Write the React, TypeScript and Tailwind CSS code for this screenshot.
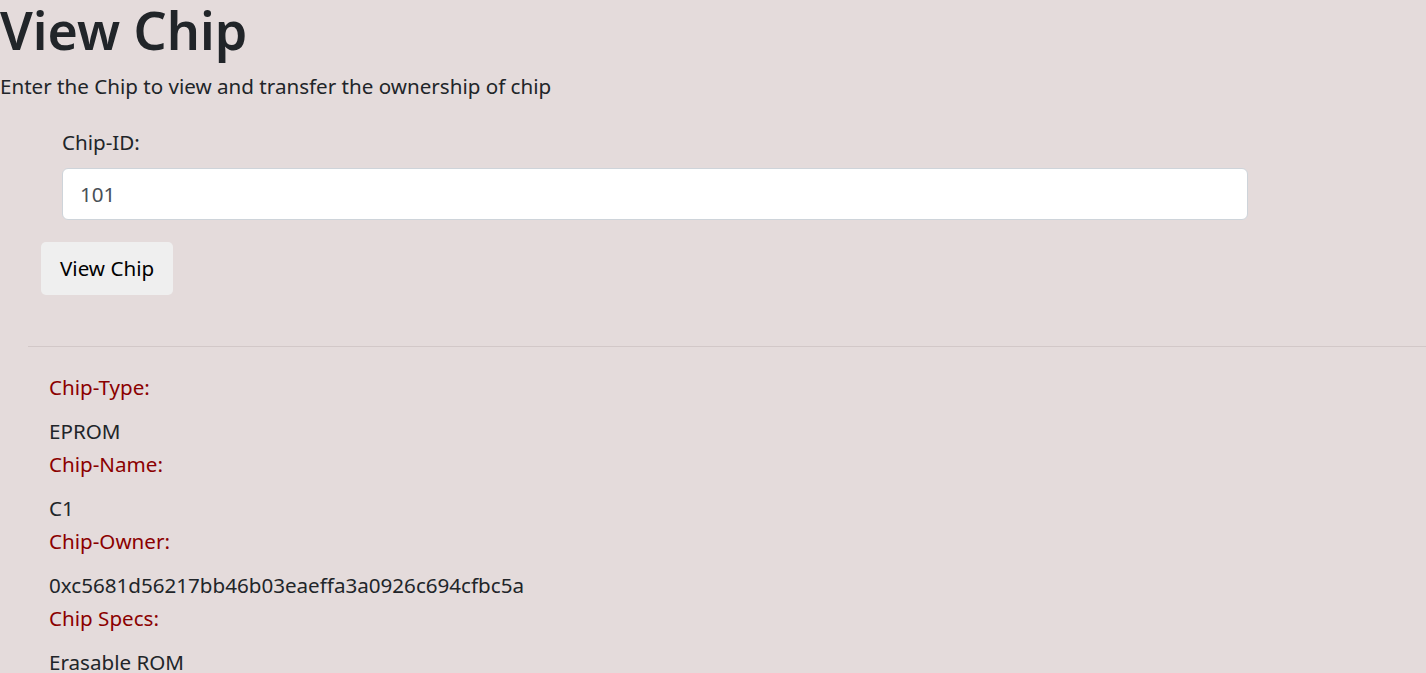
export default function App() {
  const details = [
    { label: "Chip-Type:", value: "EPROM" },
    { label: "Chip-Name:", value: "C1" },
    { label: "Chip-Owner:", value: "0xc5681d56217bb46b03eaeffa3a0926c694cfbc5a" },
    { label: "Chip Specs:", value: "Erasable ROM" },
  ];

  return (
    <div className="min-h-screen bg-[#e4dbdb] text-[#212529] font-['Noto_Sans',sans-serif]">
      <h1 className="text-[52px] leading-[60px] font-semibold">View Chip</h1>
      <p className="text-[20.6px] leading-[30px] mt-[11px]">
        Enter the Chip to view and transfer the ownership of chip
      </p>

      <div className="pl-[62px] pt-[26px] w-[1248px]">
        <label className="block text-[20.6px] leading-[30px]">Chip-ID:</label>
        <input
          className="mt-[11px] w-full h-[52px] rounded-[6px] border border-[#ced4da] bg-white px-[17px] text-[20.6px] text-[#495057] outline-none"
          defaultValue="101"
        />
      </div>

      <div className="pl-[41px] pt-[22px]">
        <button className="h-[53px] px-[19px] rounded-[5px] bg-[#efefef] text-[20.6px] text-black">
          View Chip
        </button>
      </div>

      <hr className="ml-[28px] mt-[51px] border-0 border-t border-[#d2c8c8]" />

      <div className="pl-[49px] pt-[25px]">
        {details.map((d) => (
          <div key={d.label}>
            <div className="text-[20.6px] leading-[30px] text-[#8b0000] mb-[14px]">{d.label}</div>
            <div className="text-[20.6px] leading-[30px] mb-[3px]">{d.value}</div>
          </div>
        ))}
      </div>
    </div>
  );
}
